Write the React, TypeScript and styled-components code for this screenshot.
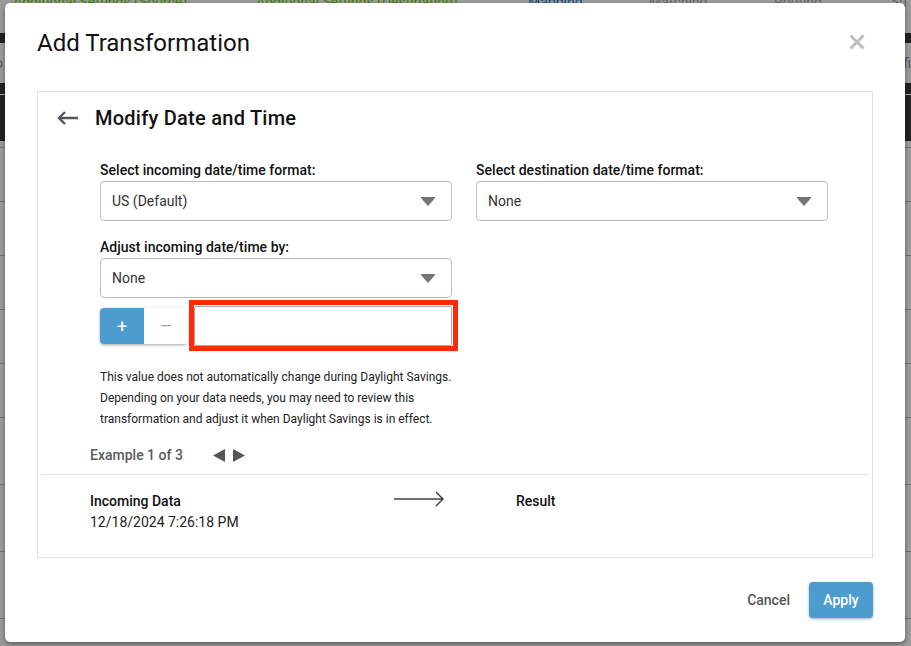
import React from "react";
import styled, { createGlobalStyle } from "styled-components";

const GlobalStyle = createGlobalStyle`
  html, body {
    margin: 0;
    padding: 0;
    width: 911px;
    height: 646px;
    overflow: hidden;
    background: #999;
    font-family: Roboto, "Liberation Sans", sans-serif;
  }

  * {
    box-sizing: border-box;
  }
`;

const Page = styled.div`
  position: relative;
  width: 911px;
  height: 646px;
  background: #9a9a9a;
  overflow: hidden;
`;

const BackTabs = styled.div`
  display: flex;
  height: 35px;
  padding-left: 13px;
  font-size: 14px;
  line-height: 8px;
  margin-top: -2px;
`;

const BackTab = styled.span<{ $color: string; $width: number }>`
  flex: none;
  width: ${(p) => p.$width}px;
  color: ${(p) => p.$color};
  white-space: nowrap;
`;

const DarkBar = styled.div<{ $height: number }>`
  height: ${(p) => p.$height}px;
  background: #222;
`;

const LightLine = styled.div`
  height: 1px;
  background: #a8a8a8;
`;

const BackRow = styled.div<{ $height: number }>`
  height: ${(p) => p.$height}px;
  border-bottom: 1px solid #6f6f6f;
`;

const BackHeading = styled.div`
  height: 40px;
  display: flex;
  align-items: center;
  justify-content: space-between;
  font-size: 14px;
  color: #555;
  margin-left: -5px;
`;

const Modal = styled.div`
  position: absolute;
  left: 5px;
  top: 3px;
  width: 900px;
  height: 639px;
  background: #fff;
  border-radius: 5px;
  box-shadow: 0 2px 4px rgba(0, 0, 0, 0.4);
  padding: 0 32px;
  display: flex;
  flex-direction: column;
`;

const ModalHeader = styled.div`
  height: 88px;
  flex: none;
  display: flex;
  align-items: flex-start;
  justify-content: space-between;
  padding-top: 23px;
`;

const ModalTitle = styled.h1`
  margin: 0;
  font-size: 24px;
  line-height: 34px;
  font-weight: 400;
  color: #111;
`;

const CloseButton = styled.button`
  border: 0;
  background: none;
  padding: 0;
  margin: 8px 8px 0 0;
  width: 16px;
  height: 16px;
  display: block;
`;

const Panel = styled.div`
  height: 467px;
  flex: none;
  border: 1px solid #e0e0e0;
  padding: 0 4px;
`;

const PanelHead = styled.div`
  display: flex;
  align-items: center;
  height: 52px;
  padding-left: 15px;
  gap: 16px;
`;

const PanelTitle = styled.h2`
  margin: 0;
  font-size: 20px;
  font-weight: 500;
  color: #111;
  letter-spacing: 0.25px;
`;

const Form = styled.div`
  padding: 17px 0 0 58px;
  display: grid;
  grid-template-columns: 352px 352px;
  column-gap: 24px;
  row-gap: 17px;
  align-items: start;
`;

const Label = styled.label`
  display: block;
  font-size: 14px;
  line-height: 18px;
  font-weight: 500;
  letter-spacing: 0.03px;
  color: #111;
  margin-bottom: 2px;
`;

const Select = styled.div`
  height: 40px;
  border: 1px solid #bdbdbd;
  border-radius: 4px;
  padding: 0 15px 0 11px;
  display: flex;
  align-items: center;
  justify-content: space-between;
  font-size: 14px;
  color: #333;
`;

const Caret = styled.span`
  width: 0;
  height: 0;
  border-left: 8px solid transparent;
  border-right: 8px solid transparent;
  border-top: 9px solid #757575;
  border-radius: 2px;
`;

const OffsetRow = styled.div`
  display: flex;
  align-items: center;
  height: 40px;
  margin-top: 8px;
`;

const SignGroup = styled.div`
  width: 88px;
  height: 36px;
  flex: none;
  display: flex;
  border-radius: 4px;
  overflow: hidden;
  box-shadow: 0 1px 3px rgba(0, 0, 0, 0.35);
`;

const SignButton = styled.button<{ $active?: boolean }>`
  flex: 1;
  border: 0;
  padding: 0;
  font-family: inherit;
  font-size: ${(p) => (p.$active ? "18px" : "23px")};
  font-weight: ${(p) => (p.$active ? 400 : 300)};
  background: ${(p) => (p.$active ? "#4d9ccf" : "#fff")};
  color: ${(p) => (p.$active ? "#fff" : "#9e9e9e")};
`;

const OffsetField = styled.div`
  position: relative;
  margin-left: 6px;
  width: 258px;
  height: 40px;
  flex: none;
`;

const OffsetInput = styled.input`
  display: block;
  width: 100%;
  height: 100%;
  border: 1px solid #a9a9a9;
  border-radius: 2px;
  outline: 0;
`;

const Highlight = styled.div`
  position: absolute;
  top: -6px;
  left: -5px;
  right: -6px;
  bottom: -5px;
  border: 5px solid #ff2a0a;
  pointer-events: none;
`;

const Note = styled.p`
  margin: 21px 0 0;
  font-size: 12px;
  line-height: 21px;
  color: #222;
  white-space: nowrap;
`;

const ExampleRow = styled.div`
  display: flex;
  align-items: center;
  height: 30px;
  margin-top: 10px;
  padding-left: 48px;
  gap: 30px;
  font-size: 14px;
  font-weight: 500;
  color: #5a5a5f;
`;

const Arrows = styled.span`
  display: flex;
  gap: 8px;
`;

const Divider = styled.div`
  height: 1px;
  background: #e0e0e0;
  margin-top: 4px;
`;

const ResultGrid = styled.div`
  display: grid;
  grid-template-columns: 304px 122px 1fr;
  padding: 16px 0 0 48px;
  font-size: 14px;
  line-height: 21px;
  color: #222;
`;

const ResultHead = styled.div`
  font-weight: 500;
  color: #111;
`;

const Footer = styled.div`
  flex: 1;
  display: flex;
  justify-content: flex-end;
  align-items: flex-start;
  padding-top: 24px;
`;

const CancelButton = styled.button`
  border: 0;
  background: none;
  height: 36px;
  padding: 0;
  margin-right: 19px;
  font-family: inherit;
  font-size: 14px;
  font-weight: 500;
  color: #555;
`;

const ApplyButton = styled.button`
  border: 0;
  width: 64px;
  height: 36px;
  border-radius: 4px;
  background: #4d9ccf;
  box-shadow: 0 1px 3px rgba(0, 0, 0, 0.35);
  font-family: inherit;
  font-size: 14px;
  font-weight: 500;
  color: #fff;
`;

const FlipSvg = styled.svg<{ $flip?: boolean }>`
  display: block;
  transform: ${(p) => (p.$flip ? "scaleX(-1)" : "none")};
`;

const Triangle = ({ flip }: { flip?: boolean }) => (
  <FlipSvg $flip={flip} width="12" height="13" viewBox="0 0 12 13">
    <path d="M0 0 L12 6.5 L0 13 Z" fill="#55565b" />
  </FlipSvg>
);

export default function App() {
  return (
    <Page>
      <GlobalStyle />
      <BackTabs>
        <BackTab $color="#3f7f00" $width={243}>Additional Settings (Source)</BackTab>
        <BackTab $color="#3f7f00" $width={272}>Additional Settings (Destination)</BackTab>
        <BackTab $color="#0b4f80" $width={121}>Mapping</BackTab>
        <BackTab $color="#666" $width={125}>Matching</BackTab>
        <BackTab $color="#666" $width={117}>Routing</BackTab>
        <BackTab $color="#666" $width={20}>Su</BackTab>
      </BackTabs>
      <DarkBar $height={10} />
      <BackHeading>
        <span>o</span>
        <span>fi</span>
      </BackHeading>
      <DarkBar $height={11} />
      <LightLine />
      <DarkBar $height={46} />
      <BackRow $height={7} />
      <BackRow $height={54} />
      <BackRow $height={54} />
      <BackRow $height={54} />
      <BackRow $height={54} />
      <BackRow $height={54} />
      <BackRow $height={67} />
      <BackRow $height={67} />
      <BackRow $height={67} />

      <Modal>
        <ModalHeader>
          <ModalTitle>Add Transformation</ModalTitle>
          <CloseButton aria-label="Close">
            <svg width="16" height="16" viewBox="0 0 16 16">
              <path d="M1.5 1.5 L14.5 14.5 M14.5 1.5 L1.5 14.5" stroke="#bdbdbd" strokeWidth="3" fill="none" />
            </svg>
          </CloseButton>
        </ModalHeader>

        <Panel>
          <PanelHead>
            <svg width="22" height="14" viewBox="0 0 22 14">
              <path d="M21 7 H2 M8 1 L2 7 L8 13" stroke="#55565b" strokeWidth="2.4" fill="none" />
            </svg>
            <PanelTitle>Modify Date and Time</PanelTitle>
          </PanelHead>

          <Form>
            <div>
              <Label>Select incoming date/time format:</Label>
              <Select>US (Default)<Caret /></Select>
            </div>
            <div>
              <Label>Select destination date/time format:</Label>
              <Select>None<Caret /></Select>
            </div>
            <div>
              <Label>Adjust incoming date/time by:</Label>
              <Select>None<Caret /></Select>
              <OffsetRow>
                <SignGroup>
                  <SignButton $active>+</SignButton>
                  <SignButton>−</SignButton>
                </SignGroup>
                <OffsetField>
                  <OffsetInput />
                  <Highlight />
                </OffsetField>
              </OffsetRow>
              <Note>
                This value does not automatically change during Daylight Savings.
                <br />
                Depending on your data needs, you may need to review this
                <br />
                transformation and adjust it when Daylight Savings is in effect.
              </Note>
            </div>
          </Form>

          <ExampleRow>
            Example 1 of 3
            <Arrows>
              <Triangle flip />
              <Triangle />
            </Arrows>
          </ExampleRow>
          <Divider />

          <ResultGrid>
            <ResultHead>Incoming Data</ResultHead>
            <svg width="50" height="16" viewBox="0 0 50 16">
              <path d="M0 8 H49 M42 1 L49 8 L42 15" stroke="#444" strokeWidth="1.5" fill="none" />
            </svg>
            <ResultHead>Result</ResultHead>
            <div>12/18/2024 7:26:18 PM</div>
          </ResultGrid>
        </Panel>

        <Footer>
          <CancelButton>Cancel</CancelButton>
          <ApplyButton>Apply</ApplyButton>
        </Footer>
      </Modal>
    </Page>
  );
}
